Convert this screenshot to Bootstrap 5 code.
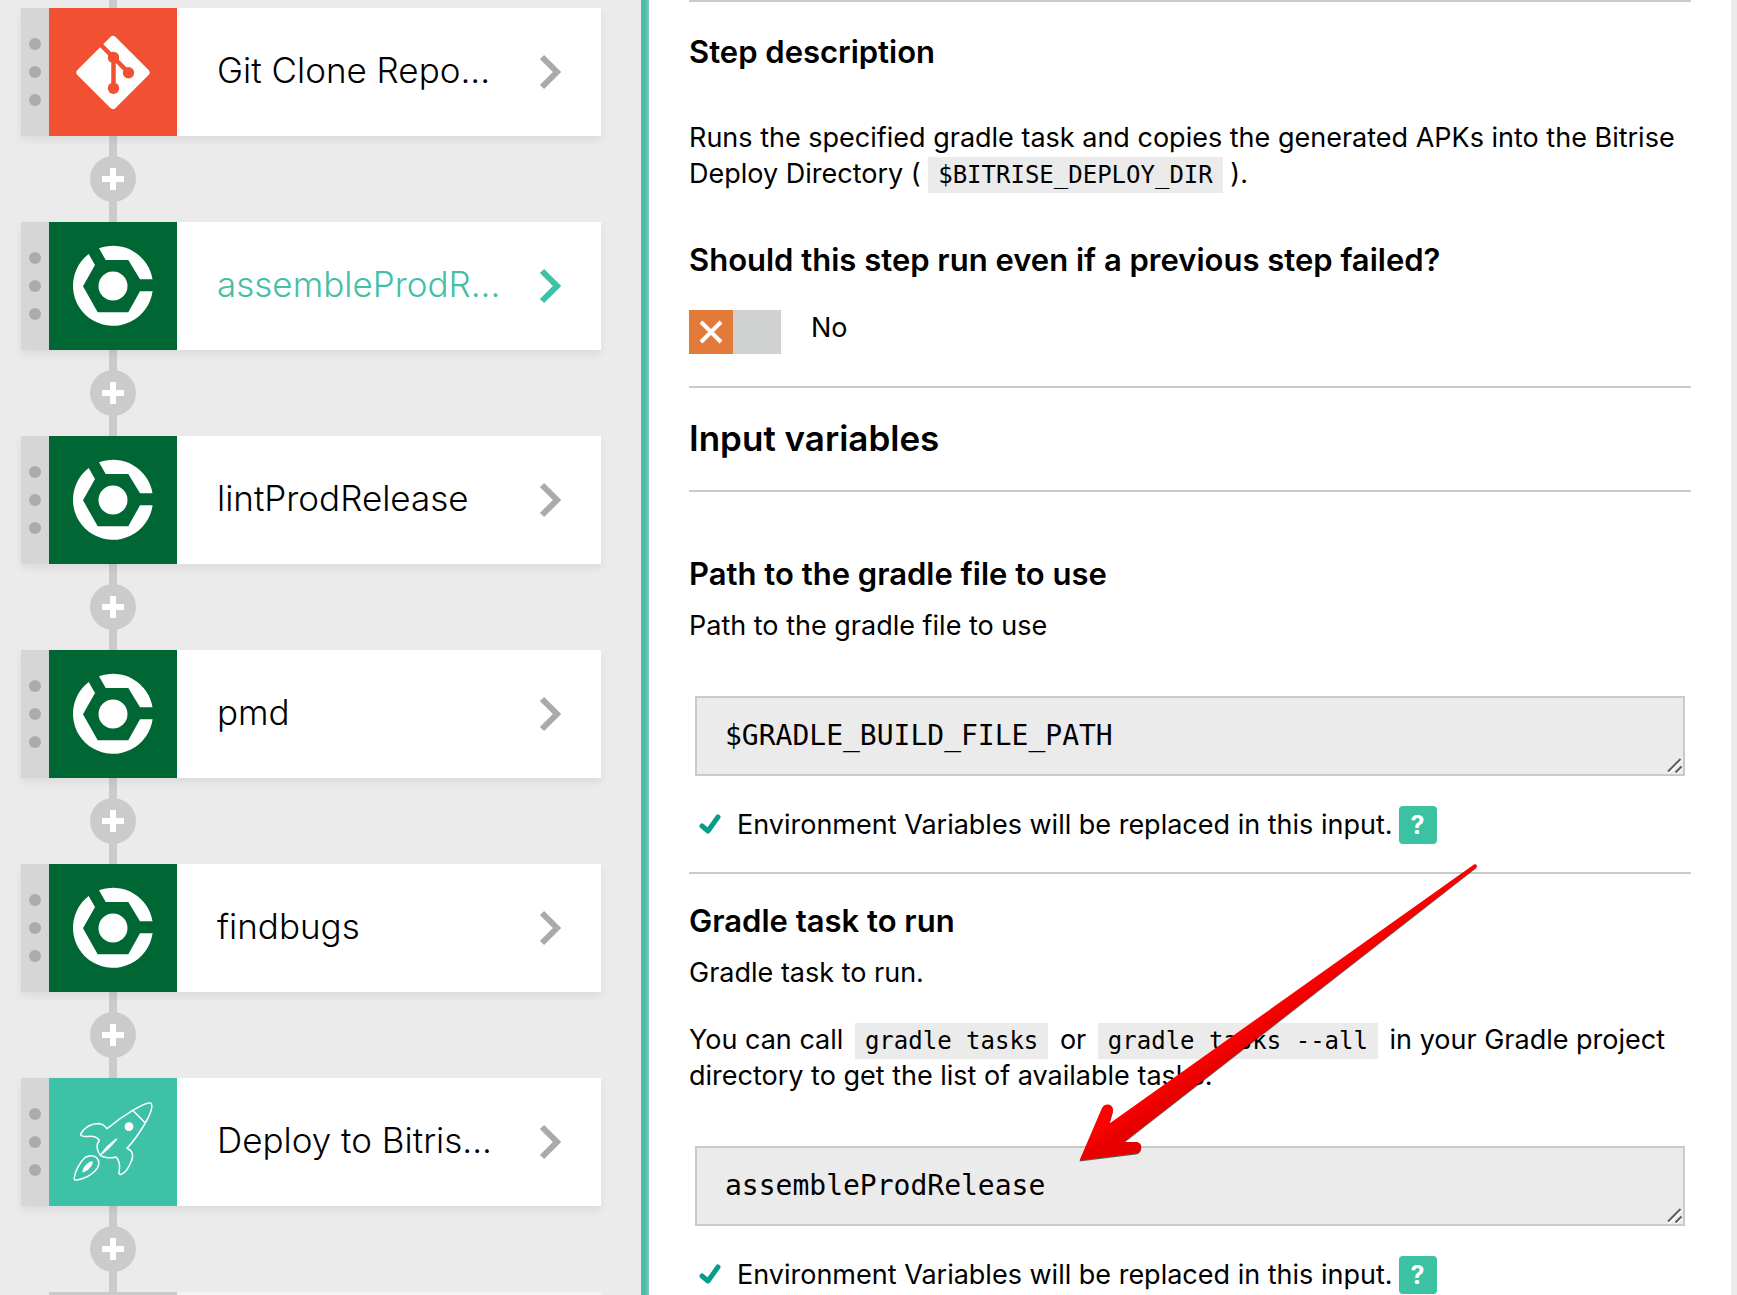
<!DOCTYPE html>
<html lang="en">
<head>
<meta charset="utf-8">
<meta name="viewport" content="width=device-width, initial-scale=1">
<title>Workflow editor</title>
<link rel="stylesheet" href="https://cdn.jsdelivr.net/npm/bootstrap@5.3.0/dist/css/bootstrap.min.css">
<style>
  body { font-family: Inter, "Open Sans", sans-serif; font-size: 27px; line-height: 36px; color: #000; background: #ebebeb; }

  /* workflow column */
  .flow-side { flex: 0 0 641px; padding: 0 40px 0 21px; background: #ebebeb; }
  .flow-divider { flex: 0 0 8px; background: linear-gradient(90deg, #4abda6 55%, #8accbe); }
  .flow-rail { position: relative; height: 86px; padding-left: 28px; }
  .flow-rail.rail-top { height: 8px; }
  .rail-slot { width: 128px; height: 100%; background: linear-gradient(#cbcbcb, #cbcbcb) center / 8px 100% no-repeat; }
  .add-step { width: 46px; height: 46px; border-radius: 50%; background: #cbcbcb; border: 0; padding: 0; }
  .step-box { position: relative; z-index: 1; height: 128px; background: #fff; box-shadow: 0 4px 8px rgba(0,0,0,.07); }
  .step-grip { width: 28px; background: #d6d6d6; border: 0; padding: 0; gap: 16px; }
  .step-grip span { width: 12px; height: 12px; border-radius: 50%; background: #ababab; }
  .step-icon { width: 128px; flex: none; }
  .step-icon svg { display: block; width: 128px; height: 128px; }
  .icon-git { background: #f15132; }
  .icon-gradle { background: #006633; }
  .icon-deploy { background: #3dc1a7; }
  .step-link { font-size: 35px; font-weight: 300; line-height: 44px; color: #000; padding: 0 40px 0 40px; }
  .step-link .chev { color: #aaa; }
  .step-link.is-current { color: #48bda6; }
  .step-link.is-current .chev { color: #3dc1a7; }
  .next-box { margin-left: 28px; background: #f4f4f4; height: 128px; }
  .next-box .step-icon { background: #c9c9c9; }

  /* details column */
  .detail-pane { background: #fff; padding: 0 40px; margin-right: 6px; }
  .rule { height: 2px; margin: 0; border: 0; background: #cacaca; opacity: 1; }
  .sub-title { font-size: 31px; font-weight: 600; line-height: 36px; margin: 0; }
  .intro { padding-top: 32px; }
  .intro-text { margin: 0; padding: 50px 0; }
  .main-title { font-size: 35px; font-weight: 600; line-height: 40px; margin: 0; padding: 30px 0 32px; }
  .first-input { padding: 64px 0 28px; }
  .second-input { padding-top: 29px; }
  .task-hint { margin: 0; padding-top: 31px; }
  .token { font-family: "DejaVu Sans Mono", monospace; font-size: 24px; line-height: 24px; color: #000; background: #ebebeb; padding: 4px 10px; }
  .run-row { gap: 30px; }
  .run-toggle { appearance: none; width: 92px; height: 44px; flex: none; margin: 0; background: url("data:image/svg+xml,%3Csvg xmlns='http://www.w3.org/2000/svg' viewBox='0 0 92 44'%3E%3Cpath fill='%23d0d2d1' d='M0 0h92v44H0z'/%3E%3Cpath fill='%23e27b3a' d='M0 0h44v44H0z'/%3E%3Cpath stroke='white' stroke-width='4' d='M12 12l20 20M32 12L12 32'/%3E%3C/svg%3E"); }
  .value-wrap { position: relative; margin: 52px 6px 30px; }
  .value-box { display: block; width: 100%; height: 80px; padding: 22px 28px; border: 2px solid #cacaca; border-radius: 0; background: #ebebeb; color: #000; font-family: "DejaVu Sans Mono", monospace; font-size: 28px; line-height: 32px; resize: none; overflow: hidden; }
  .grip-mark { position: absolute; right: 2px; bottom: 2px; }
  .env-note { padding-left: 10px; line-height: 38px; }
  .env-note span { margin-right: 6px; }
  .help-btn { width: 38px; height: 38px; border: 0; border-radius: 4px; padding: 0; background: #3dc1a3; color: #fff; font-size: 25px; font-weight: 700; line-height: 38px; }
  .pointer-arrow { position: absolute; left: 386px; top: 860px; z-index: 3; pointer-events: none; }
</style>
<script src="https://cdn.jsdelivr.net/npm/bootstrap@5.3.0/dist/js/bootstrap.bundle.min.js"></script>
</head>
<body>

<svg width="0" height="0" class="position-absolute" aria-hidden="true">
  <symbol id="gradle" viewBox="0 0 128 128">
    <g fill="#fff">
      <path d="M50 26.3L56.7 38H79.3L91 57.3H103.5A40 40 0 0 0 50 26.3Z"/>
      <path d="M39.7 32L46 43L34 64.3L48.7 90.3H79.3L91 69.3H103.6A40 40 0 1 1 39.7 32Z"/>
      <circle cx="64" cy="64" r="14.5"/>
    </g>
  </symbol>
  <symbol id="chevron" viewBox="0 0 22 36"><path d="M3 3L18 18L3 33" fill="none" stroke="currentColor" stroke-width="6"/></symbol>
  <symbol id="plus" viewBox="0 0 22 22"><path d="M11 0V22M0 11H22" stroke="#fff" stroke-width="6"/></symbol>
  <symbol id="tick" viewBox="0 0 22 20"><path d="M3 12L9 17L19 3" fill="none" stroke="#079c87" stroke-width="5" stroke-linecap="round" stroke-linejoin="round"/></symbol>
  <symbol id="resize" viewBox="0 0 16 16"><path d="M1.500 14L14 1.500M9 14.500L14.500 9" stroke="#fff" stroke-width="2" transform="translate(0 1.500)"/><path d="M1 13.500L13.500 1M8.500 14.500L14.500 8.500" stroke="#5c5c5c" stroke-width="2"/></symbol>
</svg>

<div class="d-flex vh-100 overflow-hidden">
  <aside class="flow-side">
    <div class="flow-rail rail-top"><div class="rail-slot"></div></div>

    <div class="step-box d-flex">
      <button class="step-grip d-flex flex-column align-items-center justify-content-center" aria-label="Move step"><span></span><span></span><span></span></button>
      <div class="step-icon icon-git">
        <svg viewBox="0 0 128 128" aria-hidden="true">
          <rect x="37" y="37.500" width="54" height="54" rx="4" fill="#fff" transform="rotate(45 64 64.500)"/>
          <path d="M50 35L64.500 49.500L79.500 64.500M64.500 49.500V80" stroke="#f15132" stroke-width="4.500" fill="none"/>
          <g fill="#f15132"><circle cx="64.500" cy="49.500" r="5.700"/><circle cx="79.500" cy="64.700" r="5.700"/><circle cx="64.500" cy="80.300" r="5.700"/></g>
        </svg>
      </div>
      <a href="#" class="step-link flex-fill d-flex align-items-center justify-content-between text-decoration-none"><span class="pb-1">Git Clone Repo...</span><svg class="chev" width="22" height="36"><use href="#chevron"/></svg></a>
    </div>
    <div class="flow-rail"><div class="rail-slot d-flex align-items-center justify-content-center"><button class="add-step d-flex align-items-center justify-content-center" aria-label="Add step"><svg width="22" height="22"><use href="#plus"/></svg></button></div></div>

    <div class="step-box d-flex">
      <button class="step-grip d-flex flex-column align-items-center justify-content-center" aria-label="Move step"><span></span><span></span><span></span></button>
      <div class="step-icon icon-gradle"><svg aria-hidden="true"><use href="#gradle"/></svg></div>
      <a href="#" class="step-link is-current flex-fill d-flex align-items-center justify-content-between text-decoration-none"><span class="pb-1">assembleProdR...</span><svg class="chev" width="22" height="36"><use href="#chevron"/></svg></a>
    </div>
    <div class="flow-rail"><div class="rail-slot d-flex align-items-center justify-content-center"><button class="add-step d-flex align-items-center justify-content-center" aria-label="Add step"><svg width="22" height="22"><use href="#plus"/></svg></button></div></div>

    <div class="step-box d-flex">
      <button class="step-grip d-flex flex-column align-items-center justify-content-center" aria-label="Move step"><span></span><span></span><span></span></button>
      <div class="step-icon icon-gradle"><svg aria-hidden="true"><use href="#gradle"/></svg></div>
      <a href="#" class="step-link flex-fill d-flex align-items-center justify-content-between text-decoration-none"><span class="pb-1">lintProdRelease</span><svg class="chev" width="22" height="36"><use href="#chevron"/></svg></a>
    </div>
    <div class="flow-rail"><div class="rail-slot d-flex align-items-center justify-content-center"><button class="add-step d-flex align-items-center justify-content-center" aria-label="Add step"><svg width="22" height="22"><use href="#plus"/></svg></button></div></div>

    <div class="step-box d-flex">
      <button class="step-grip d-flex flex-column align-items-center justify-content-center" aria-label="Move step"><span></span><span></span><span></span></button>
      <div class="step-icon icon-gradle"><svg aria-hidden="true"><use href="#gradle"/></svg></div>
      <a href="#" class="step-link flex-fill d-flex align-items-center justify-content-between text-decoration-none"><span class="pb-1">pmd</span><svg class="chev" width="22" height="36"><use href="#chevron"/></svg></a>
    </div>
    <div class="flow-rail"><div class="rail-slot d-flex align-items-center justify-content-center"><button class="add-step d-flex align-items-center justify-content-center" aria-label="Add step"><svg width="22" height="22"><use href="#plus"/></svg></button></div></div>

    <div class="step-box d-flex">
      <button class="step-grip d-flex flex-column align-items-center justify-content-center" aria-label="Move step"><span></span><span></span><span></span></button>
      <div class="step-icon icon-gradle"><svg aria-hidden="true"><use href="#gradle"/></svg></div>
      <a href="#" class="step-link flex-fill d-flex align-items-center justify-content-between text-decoration-none"><span class="pb-1">findbugs</span><svg class="chev" width="22" height="36"><use href="#chevron"/></svg></a>
    </div>
    <div class="flow-rail"><div class="rail-slot d-flex align-items-center justify-content-center"><button class="add-step d-flex align-items-center justify-content-center" aria-label="Add step"><svg width="22" height="22"><use href="#plus"/></svg></button></div></div>

    <div class="step-box d-flex">
      <button class="step-grip d-flex flex-column align-items-center justify-content-center" aria-label="Move step"><span></span><span></span><span></span></button>
      <div class="step-icon icon-deploy">
        <svg viewBox="0 0 128 128" aria-hidden="true">
          <g fill="none" stroke="#fff" stroke-width="1.500" stroke-linejoin="round">
            <path d="M58 50.700C66 44 75 37.500 83.700 32.300C91 28 101 23 102.500 26C104 30 101 37 96.300 45C91 54 84 64 78 70.300C84 73 85 78 82 84C80 89 76 95 72 96.500C69 97 70 94 70.500 91C71 86 70 82 67 79C63 80.500 55 80 51.700 77.700C48 73 47 67 50.300 62C47 58 42 58 38 58.500C34 59 30.500 57.500 32 55.500C36 49 43 45.500 50 45.500C53 46 56 48 58 50.700Z"/>
            <path d="M83.700 32.300L96.300 45"/>
            <path d="M25.200 100C26 93 31 84 36 79.500C40 77 45 77 48 80C51 84 50 89 46 93C41 98 34 101 28 102C25.500 102.300 25 101.500 25.200 100Z"/>
          </g>
          <g fill="#fff"><circle cx="80" cy="48.700" r="4.400"/><path d="M68.200 61.500C63 68 57 74 50.500 78.300C54 71 61 65 67 60.500Q68.500 60 68.200 61.500Z"/><path d="M43.500 83.300C45 87 38 94 33.500 94.500C33 90 39 83 43.500 83.300Z"/></g>
        </svg>
      </div>
      <a href="#" class="step-link flex-fill d-flex align-items-center justify-content-between text-decoration-none"><span class="pb-1">Deploy to Bitris...</span><svg class="chev" width="22" height="36"><use href="#chevron"/></svg></a>
    </div>
    <div class="flow-rail"><div class="rail-slot d-flex align-items-center justify-content-center"><button class="add-step d-flex align-items-center justify-content-center" aria-label="Add step"><svg width="22" height="22"><use href="#plus"/></svg></button></div></div>

    <div class="next-box d-flex"><div class="step-icon"></div></div>
  </aside>
  <div class="flow-divider"></div>

  <main class="detail-pane flex-fill position-relative">
    <hr class="rule">
    <section class="intro">
      <h3 class="sub-title">Step description</h3>
      <p class="intro-text">Runs the specified gradle task and copies the generated APKs into the Bitrise Deploy Directory ( <code class="token">$BITRISE_DEPLOY_DIR</code> ).</p>
      <h3 class="sub-title">Should this step run even if a previous step failed?</h3>
    </section>
    <div class="run-row d-flex align-items-start py-4 my-2">
      <input type="checkbox" role="switch" class="run-toggle" id="runAlways">
      <label for="runAlways" class="lh-1 pt-1">No</label>
    </div>
    <hr class="rule">
    <h2 class="main-title">Input variables</h2>
    <hr class="rule">

    <section class="first-input">
      <h3 class="sub-title"><label for="gradleFile">Path to the gradle file to use</label></h3>
      <p class="mb-0 pt-3">Path to the gradle file to use</p>
      <div class="value-wrap">
        <textarea id="gradleFile" class="value-box" rows="1" spellcheck="false">$GRADLE_BUILD_FILE_PATH</textarea>
        <svg class="grip-mark" width="16" height="16" aria-hidden="true"><use href="#resize"/></svg>
      </div>
      <div class="env-note d-flex align-items-start">
        <svg class="mt-2 me-3" width="22" height="20" aria-hidden="true"><use href="#tick"/></svg>
        <span>Environment Variables will be replaced in this input.</span>
        <button class="help-btn">?</button>
      </div>
    </section>
    <hr class="rule">

    <section class="second-input">
      <h3 class="sub-title"><label for="gradleTask">Gradle task to run</label></h3>
      <p class="mb-0 pt-3">Gradle task to run.</p>
      <p class="task-hint">You can call <code class="token mx-1">gradle tasks</code> or <code class="token mx-1">gradle tasks --all</code> in your Gradle project directory to get the list of available tasks.</p>
      <div class="value-wrap">
        <textarea id="gradleTask" class="value-box" rows="1" spellcheck="false">assembleProdRelease</textarea>
        <svg class="grip-mark" width="16" height="16" aria-hidden="true"><use href="#resize"/></svg>
      </div>
      <div class="env-note d-flex align-items-start">
        <svg class="mt-2 me-3" width="22" height="20" aria-hidden="true"><use href="#tick"/></svg>
        <span>Environment Variables will be replaced in this input.</span>
        <button class="help-btn">?</button>
      </div>
    </section>

    <svg class="pointer-arrow" width="450" height="310" viewBox="1035 860 450 310" aria-hidden="true">
      <defs>
        <linearGradient id="red" gradientUnits="userSpaceOnUse" x1="1270" y1="1000" x2="1284" y2="1020"><stop offset="0.300" stop-color="#f00"/><stop offset="1" stop-color="#e60000"/></linearGradient>
        <filter id="edge" color-interpolation-filters="sRGB"><feDropShadow dx="0" dy="1" stdDeviation="0.600" flood-color="#000" flood-opacity="0.600"/></filter>
      </defs>
      <path filter="url(#edge)" fill="url(#red)" d="M1079.500 1160.500L1102 1108C1105 1102 1114 1104 1113 1111L1109.500 1123.500L1474 864.500C1476 863.500 1478 865.500 1476 867.500L1124 1142H1136C1143 1142 1143 1152 1136 1153.500Z"/>
    </svg>
  </main>
</div>
</body>
</html>
